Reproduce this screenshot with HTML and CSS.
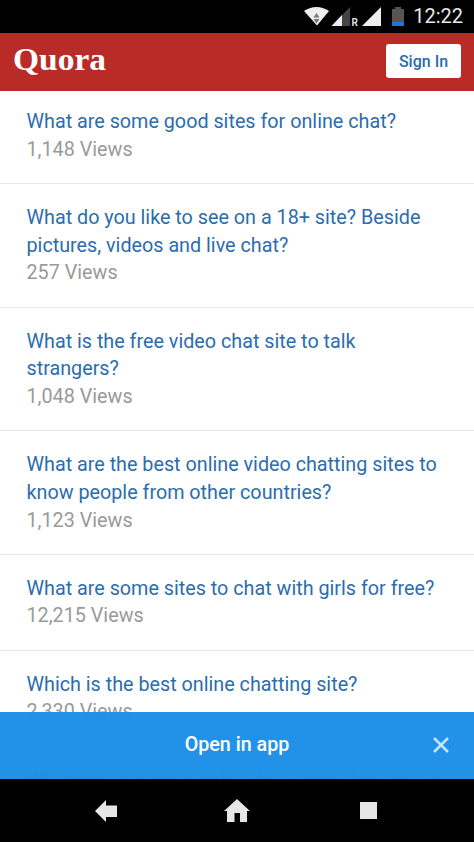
FILE: index.html
```
<!DOCTYPE html>
<html lang="en">
<head>
    <meta charset="UTF-8">
    <meta name="viewport" content="width=device-width, initial-scale=1.0">
    <title>Quora</title>
    <link rel="stylesheet" href="styles.css">
</head>
<body>
    <!-- Status bar -->
    <div class="status-bar">
        <svg class="status-icons" width="112" height="33" viewBox="0 0 112 33">
            <path d="M0 11Q12.500 3 25 11L13 25.500Z" fill="#eee"/>
            <path d="M12.500 13l3 4.500h-6zM9.500 19h6l-3 4.500z" fill="#777"/>
            <path d="M46 7v19H27.500z" fill="#444"/>
            <path d="M38 15v11H27.500z" fill="#eee"/>
            <path d="M77 7v19H58z" fill="#eee"/>
            <path d="M88 9h3V7h6v2h3v13H88z" fill="#555"/>
            <path d="M88 22h12v4H88z" fill="#1976dc"/>
            <text class="roaming" x="47.500" y="26">R</text>
        </svg>
        <span class="clock">12:22</span>
    </div>

    <header class="header">
        <a class="logo" href="#"><svg width="100" height="46" viewBox="0 0 100 46"><text x="0" y="32" textLength="93" lengthAdjust="spacingAndGlyphs">Quora</text></svg></a>
        <a class="sign-in" href="#">Sign In</a>
    </header>

    <main class="questions">
        <article class="question">
            <a href="#">What are some good sites for online chat?</a>
            <p>1,148 Views</p>
        </article>
        <article class="question">
            <a href="#">What do you like to see on a 18+ site? Beside<br>pictures, videos and live chat?</a>
            <p>257 Views</p>
        </article>
        <article class="question">
            <a href="#">What is the free video chat site to talk<br>strangers?</a>
            <p>1,048 Views</p>
        </article>
        <article class="question">
            <a href="#">What are the best online video chatting sites to<br>know people from other countries?</a>
            <p>1,123 Views</p>
        </article>
        <article class="question">
            <a href="#">What are some sites to chat with girls for free?</a>
            <p>12,215 Views</p>
        </article>
        <article class="question">
            <a href="#">Which is the best online chatting site?</a>
            <p>2,330 Views</p>
        </article>
        <article class="question">
            <a href="#">What's are the best online free sexy chat sites?</a>
        </article>
    </main>

    <!-- App banner over the list -->
    <div class="app-banner">
        <a href="#">Open in app</a>
        <svg class="close" width="18" height="18" viewBox="0 0 18 18">
            <path d="M2 2l14 14M16 2L2 16"/>
        </svg>
    </div>

    <!-- Android navigation -->
    <nav class="nav-bar">
        <svg class="nav-back" width="24" height="24" viewBox="0 0 24 24"><path d="M1 12L12 1v5.500h11v11.500H12v5z"/></svg>
        <svg class="nav-home" width="28" height="26" viewBox="0 0 28 26"><path d="M14 1L27 13h-3v11h-7v-9h-5.500v9H4V13H1z"/></svg>
        <svg class="nav-recent" width="17" height="17" viewBox="0 0 17 17"><path d="M0 0h17v17H0z"/></svg>
    </nav>
</body>
</html>
```
FILE: styles.css
```
* {
    box-sizing: border-box;
}

body {
    margin: 0;
    height: 842px;
    overflow: hidden;
    position: relative;
    display: flex;
    flex-direction: column;
    font-family: Roboto, Arial, sans-serif;
    background-color: #fff;
}

a {
    text-decoration: none;
}

.status-bar {
    display: flex;
    flex: none;
    justify-content: flex-end;
    align-items: center;
    height: 33px;
    padding-right: 11px;
    background-color: #000;
    color: #e8e8e8;
}

.status-icons {
    margin-right: -3px;
}

.roaming {
    font-size: 10px;
    font-weight: bold;
    fill: #ddd;
}

.clock {
    font-size: 20px;
    line-height: 33px;
}

.header {
    display: flex;
    flex: none;
    justify-content: space-between;
    align-items: center;
    height: 58px;
    padding: 0 13px 3px;
    background-color: #b92b27;
}

.logo svg {
    display: block;
}

.logo text {
    font-family: "Liberation Serif", serif;
    font-size: 32px;
    font-weight: bold;
    fill: #fff;
}

.sign-in {
    width: 75px;
    height: 34px;
    border-radius: 3px;
    background-color: #fff;
    color: #2b6dad;
    font-size: 16px;
    font-weight: 500;
    line-height: 35px;
    text-align: center;
}

.questions {
    flex: 1;
    min-height: 0;
    margin-top: -3px;
    overflow: hidden;
}

.question {
    padding: 20px 26.500px 19.500px;
    border-bottom: 1px solid #e8e8e8;
    font-size: 19.750px;
    line-height: 27.700px;
}

.question a {
    color: #2b6dad;
}

.question p {
    margin: 0;
    color: #999;
}

.app-banner {
    position: absolute;
    left: 0;
    right: 0;
    top: 712px;
    display: flex;
    justify-content: center;
    align-items: center;
    height: 67px;
    padding-bottom: 2px;
    background-color: rgba(30, 144, 232, 0.985);
}

.app-banner a {
    color: #fff;
    font-size: 19.700px;
    font-weight: 500;
}

.close {
    position: absolute;
    right: 24px;
    fill: none;
    stroke: #c8e4fa;
    stroke-width: 2.500;
}

.nav-bar {
    display: flex;
    flex: none;
    align-items: center;
    height: 63px;
    padding-left: 94px;
    background-color: #000;
    fill: #e6e6e6;
}

.nav-home {
    margin-left: 104.500px;
}

.nav-recent {
    margin-left: 109.500px;
}
```
